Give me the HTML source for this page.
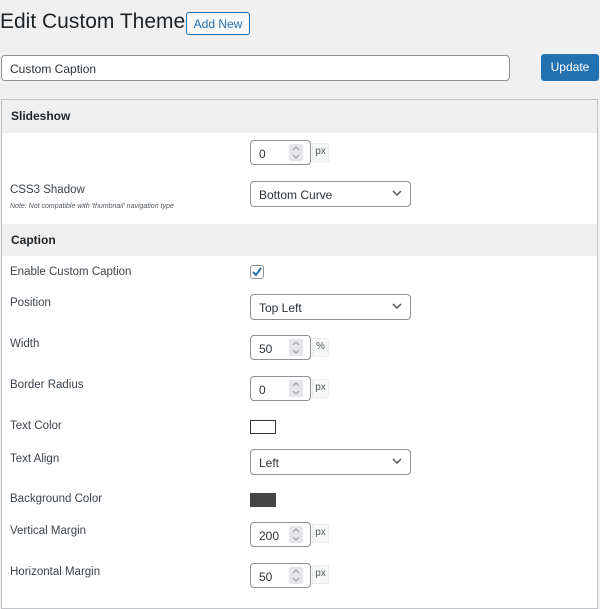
<!DOCTYPE html><html><head><style>
body{margin:0;width:600px;height:600px;overflow:hidden;background:#f0f0f1;font-family:"Liberation Sans",sans-serif;color:#3c434a;position:relative}
.a{position:absolute}
.lbl{position:absolute;left:10px;font-size:11.5px;color:#3c434a}
.num{position:absolute;left:250px;width:61px;height:25px;border:1px solid #8c8f94;border-radius:4px;background:#fff;font-size:12px;box-sizing:border-box;padding:6px 0 0 8px;color:#2c3338}
.num svg{position:absolute;left:38px;top:3px}
.px{position:absolute;left:312px;width:17px;height:19px;background:#f6f7f7;border:1px solid #ececec;font-size:10px;color:#50575e;text-align:center;line-height:16px;box-sizing:border-box}
.sel{position:absolute;left:250px;width:161px;height:26px;border:1px solid #8c8f94;border-radius:4px;background:#fff;box-sizing:border-box;font-size:12px;padding:6px 0 0 8px;color:#2c3338}
.sel svg{position:absolute;right:8px;top:8px}
.hd{position:absolute;left:2px;width:595px;background:#f0f0f1;font-weight:bold;font-size:12px;color:#1d2327;box-sizing:border-box;padding-left:9px}
</style></head><body>
<div class="a" style="left:0;top:10px;font-size:21px;color:#1d2327">Edit Custom Theme</div>
<div class="a" style="left:186px;top:12px;width:64px;height:23px;border:1px solid #2271b1;border-radius:3px;background:#f6f7f7;color:#2271b1;font-size:12px;text-align:center;line-height:22px;box-sizing:border-box">Add New</div>
<div class="a" style="left:1px;top:55px;width:509px;height:26px;border:1px solid #8c8f94;border-radius:4px;background:#fff;box-sizing:border-box;font-size:12px;padding:6px 0 0 8px;color:#2c3338">Custom Caption</div>
<div class="a" style="left:541px;top:54px;width:58px;height:27px;background:#2271b1;border-radius:3px;color:#fff;font-size:12px;text-align:center;line-height:27px">Update</div>
<div class="a" style="left:1px;top:99px;width:597px;height:510px;background:#fff;border:1px solid #c3c4c7;box-sizing:border-box"></div>
<div class="hd" style="top:100px;height:33px;line-height:33px">Slideshow</div>
<div class="num" style="top:140px">0<svg width="14" height="17"><rect width="14" height="17" rx="2" fill="#e6e6ea"/><path d="M4 6l3-3 3 3M4 11l3 3 3-3" fill="none" stroke="#999" stroke-width="1"/></svg></div><div class="px" style="top:143px">px</div>
<div class="lbl" style="top:184px">CSS3 Shadow</div>
<div class="a" style="left:10px;top:203px;font-size:7px;font-style:italic;color:#50575e">Note: Not compatible with 'thumbnail' navigation type</div>
<div class="sel" style="top:181px">Bottom Curve<svg width="10" height="7"><path d="M1 1l4 4 4-4" fill="none" stroke="#50575e" stroke-width="1.5"/></svg></div>
<div class="hd" style="top:224px;height:32px;line-height:32px">Caption</div>
<div class="lbl" style="top:266px">Enable Custom Caption</div>
<div class="a" style="left:250px;top:265px;width:14px;height:14px;border:1px solid #8c8f94;border-radius:3px;box-sizing:border-box;background:#fff"><svg width="14" height="14" style="position:absolute;left:-1px;top:-1px"><path d="M3 7l3 3 5-7" fill="none" stroke="#2271b1" stroke-width="2"/></svg></div>
<div class="lbl" style="top:297px">Position</div>
<div class="sel" style="top:294px">Top Left<svg width="10" height="7"><path d="M1 1l4 4 4-4" fill="none" stroke="#50575e" stroke-width="1.5"/></svg></div>
<div class="lbl" style="top:338px">Width</div>
<div class="num" style="top:335px">50<svg width="14" height="17"><rect width="14" height="17" rx="2" fill="#e6e6ea"/><path d="M4 6l3-3 3 3M4 11l3 3 3-3" fill="none" stroke="#999" stroke-width="1"/></svg></div><div class="px" style="top:338px">%</div>
<div class="lbl" style="top:379px">Border Radius</div>
<div class="num" style="top:376px">0<svg width="14" height="17"><rect width="14" height="17" rx="2" fill="#e6e6ea"/><path d="M4 6l3-3 3 3M4 11l3 3 3-3" fill="none" stroke="#999" stroke-width="1"/></svg></div><div class="px" style="top:379px">px</div>
<div class="lbl" style="top:420px">Text Color</div>
<div class="a" style="left:250px;top:420px;width:26px;height:14px;border:1px solid #333;box-sizing:border-box;background:#fff"></div>
<div class="lbl" style="top:453px">Text Align</div>
<div class="sel" style="top:449px">Left<svg width="10" height="7"><path d="M1 1l4 4 4-4" fill="none" stroke="#50575e" stroke-width="1.5"/></svg></div>
<div class="lbl" style="top:493px">Background Color</div>
<div class="a" style="left:250px;top:493px;width:26px;height:14px;background:#444"></div>
<div class="lbl" style="top:525px">Vertical Margin</div>
<div class="num" style="top:522px">200<svg width="14" height="17"><rect width="14" height="17" rx="2" fill="#e6e6ea"/><path d="M4 6l3-3 3 3M4 11l3 3 3-3" fill="none" stroke="#999" stroke-width="1"/></svg></div><div class="px" style="top:524px">px</div>
<div class="lbl" style="top:566px">Horizontal Margin</div>
<div class="num" style="top:563px">50<svg width="14" height="17"><rect width="14" height="17" rx="2" fill="#e6e6ea"/><path d="M4 6l3-3 3 3M4 11l3 3 3-3" fill="none" stroke="#999" stroke-width="1"/></svg></div><div class="px" style="top:565px">px</div>
</body></html>
